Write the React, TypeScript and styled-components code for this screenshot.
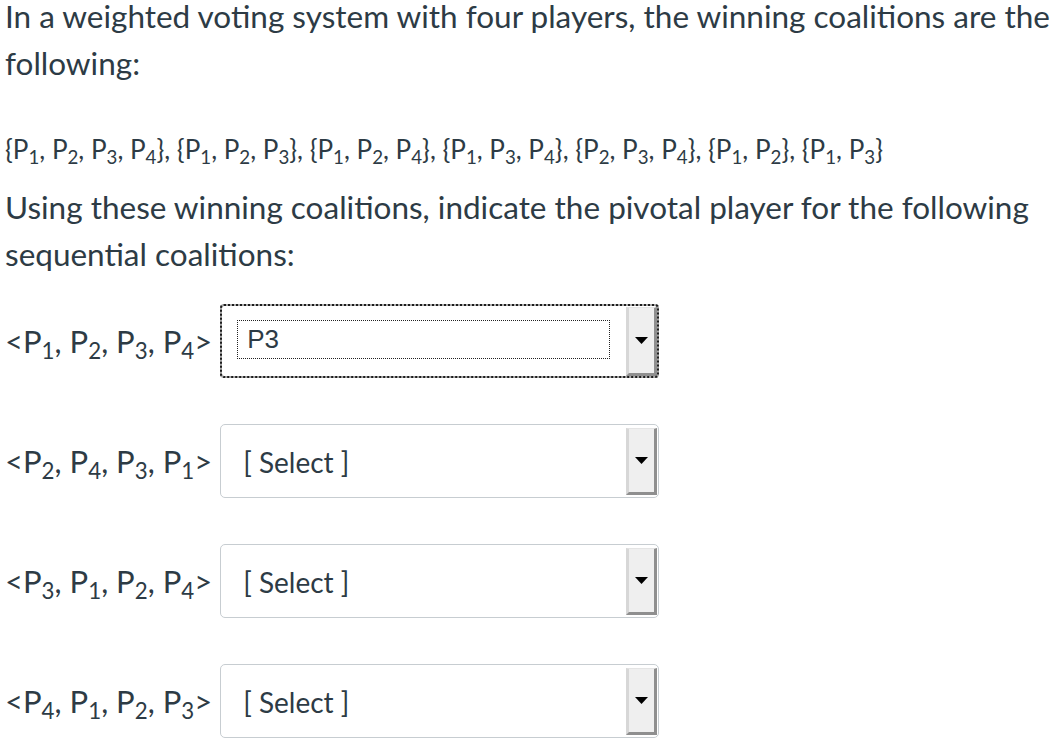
import React from 'react';
import styled, { createGlobalStyle } from 'styled-components';

const GlobalStyle = createGlobalStyle`
  body {
    margin: 0;
    background: #ffffff;
    font-family: Lato, "Noto Sans", sans-serif;
    color: #2d3b45;
    overflow: hidden;
  }
`;

const Page = styled.div`
  margin-top: -7px;
  padding: 0 0 0 5px;
  width: 1056px;
`;

const Paragraph = styled.p<{ gap?: number; size?: number }>`
  margin: 0;
  font-size: ${(props) => props.size ?? 31.5}px;
  line-height: 47px;
  margin-bottom: ${(props) => props.gap ?? 0}px;
`;

const Sub = styled.sub`
  font-size: 0.72em;
  line-height: 0;
  vertical-align: -0.28em;
`;

const Rows = styled.div`
  display: grid;
  gap: 46px;
`;

const Row = styled.div`
  display: flex;
  align-items: center;
  gap: 8px;
`;

const Label = styled.span`
  font-size: 31px;
  white-space: nowrap;
`;

const SelectBox = styled.div`
  box-sizing: border-box;
  width: 439px;
  height: 74px;
  display: flex;
  align-items: stretch;
  background: #fff;
  border: 1px solid #c7cdd1;
  border-radius: 5px;
  padding: 3px 1px 2px 0;
`;

const FocusedBox = styled(SelectBox)`
  border: 2px solid #a9a9a9;
  outline: 2px dotted #1c1c1c;
  outline-offset: -2px;
  border-radius: 4px;
  padding: 1px 0 0 0;
`;

const Value = styled.div`
  flex: 1;
  display: flex;
  align-items: center;
  padding-left: 22px;
  font-size: 28px;
`;

const FocusedValue = styled.div`
  flex: 1;
  display: flex;
  align-items: center;
  margin: 13px 16px 17px 15px;
  border: 1px dotted #222;
  padding-left: 9px;
  font-family: "Liberation Sans", Arial, sans-serif;
  font-size: 26px;
`;

const Arrow = styled.div`
  box-sizing: border-box;
  width: 31px;
  display: flex;
  align-items: center;
  justify-content: center;
  background: #efefef;
  border-left: 3px solid #d7d7d7;
  border-top: 1px solid #e4e4e4;
  border-right: 3px solid #8f8f8f;
  border-bottom: 3px solid #8f8f8f;
`;

const Triangle = () => (
  <svg width="13" height="7" viewBox="0 0 13 7">
    <path d="M0 0 L13 0 L6.5 7 Z" fill="#000" />
  </svg>
);

const Seq = ({ items }: { items: number[] }) => (
  <Label>
    &lt;
    {items.map((n, i) => (
      <React.Fragment key={i}>
        P<Sub>{n}</Sub>
        {i < items.length - 1 ? ', ' : ''}
      </React.Fragment>
    ))}
    &gt;
  </Label>
);

const coalitions = [
  [1, 2, 3, 4],
  [1, 2, 3],
  [1, 2, 4],
  [1, 3, 4],
  [2, 3, 4],
  [1, 2],
  [1, 3],
];

const sequences = [
  [1, 2, 3, 4],
  [2, 4, 3, 1],
  [3, 1, 2, 4],
  [4, 1, 2, 3],
];

export default function App() {
  return (
    <Page>
      <GlobalStyle />
      <Paragraph gap={39}>
        In a weighted voting system with four players, the winning coalitions are the following:
      </Paragraph>
      <Paragraph gap={11} size={26}>
        {coalitions.map((c, ci) => (
          <React.Fragment key={ci}>
            {'{'}
            {c.map((n, i) => (
              <React.Fragment key={i}>
                P<Sub>{n}</Sub>
                {i < c.length - 1 ? ', ' : ''}
              </React.Fragment>
            ))}
            {'}'}
            {ci < coalitions.length - 1 ? ', ' : ''}
          </React.Fragment>
        ))}
      </Paragraph>
      <Paragraph gap={26}>
        Using these winning coalitions, indicate the pivotal player for the following sequential coalitions:
      </Paragraph>
      <Rows>
        {sequences.map((s, i) => (
          <Row key={i}>
            <Seq items={s} />
            {i === 0 ? (
              <FocusedBox>
                <FocusedValue>P3</FocusedValue>
                <Arrow>
                  <Triangle />
                </Arrow>
              </FocusedBox>
            ) : (
              <SelectBox>
                <Value>[ Select ]</Value>
                <Arrow>
                  <Triangle />
                </Arrow>
              </SelectBox>
            )}
          </Row>
        ))}
      </Rows>
    </Page>
  );
}
